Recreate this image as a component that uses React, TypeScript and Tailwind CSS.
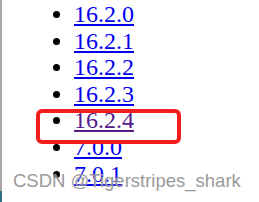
const versions = ['16.1.9', '16.2.0', '16.2.1', '16.2.2', '16.2.3', '16.2.4', '7.0.0', '7.0.1'];

export default function App() {
  return (
    <div className="relative w-[259px] h-[202px] overflow-hidden bg-white">
      <div className="flex h-full">
        <div className="flex flex-col w-[2px] shrink-0">
          <div className="h-[191px] bg-[#a8a8a8]" />
          <div className="flex-1 bg-[#2f6f86]" />
        </div>
        <ul
          className="list-disc ml-[32px] pl-10 mt-[-25.5px] text-[24px] leading-[26.6px] text-black"
          style={{ fontFamily: '"Liberation Serif", serif' }}
        >
          {versions.map((v) => (
            <li key={v}>
              <a
                href="#"
                className={`underline ${v === '16.2.4' ? 'text-[#551a8b]' : 'text-[#0000ee]'}`}
              >
                {v}
              </a>
            </li>
          ))}
        </ul>
      </div>

      {/* highlight box drawn over the screenshot */}
      <div className="absolute left-[36px] top-[109px] w-[145px] h-[35px] border-[4px] border-[#f41d1d] rounded-[6px]" />

      {/* watermark */}
      <div
        className="absolute left-[13px] top-[170px] text-[18.5px] leading-[22px] text-[#8f8f8f] opacity-90 whitespace-nowrap"
        style={{ fontFamily: '"Liberation Sans", Arial, sans-serif', textShadow: '0 0 1px #fff' }}
      >
        CSDN @Tigerstripes_shark
      </div>
    </div>
  );
}
